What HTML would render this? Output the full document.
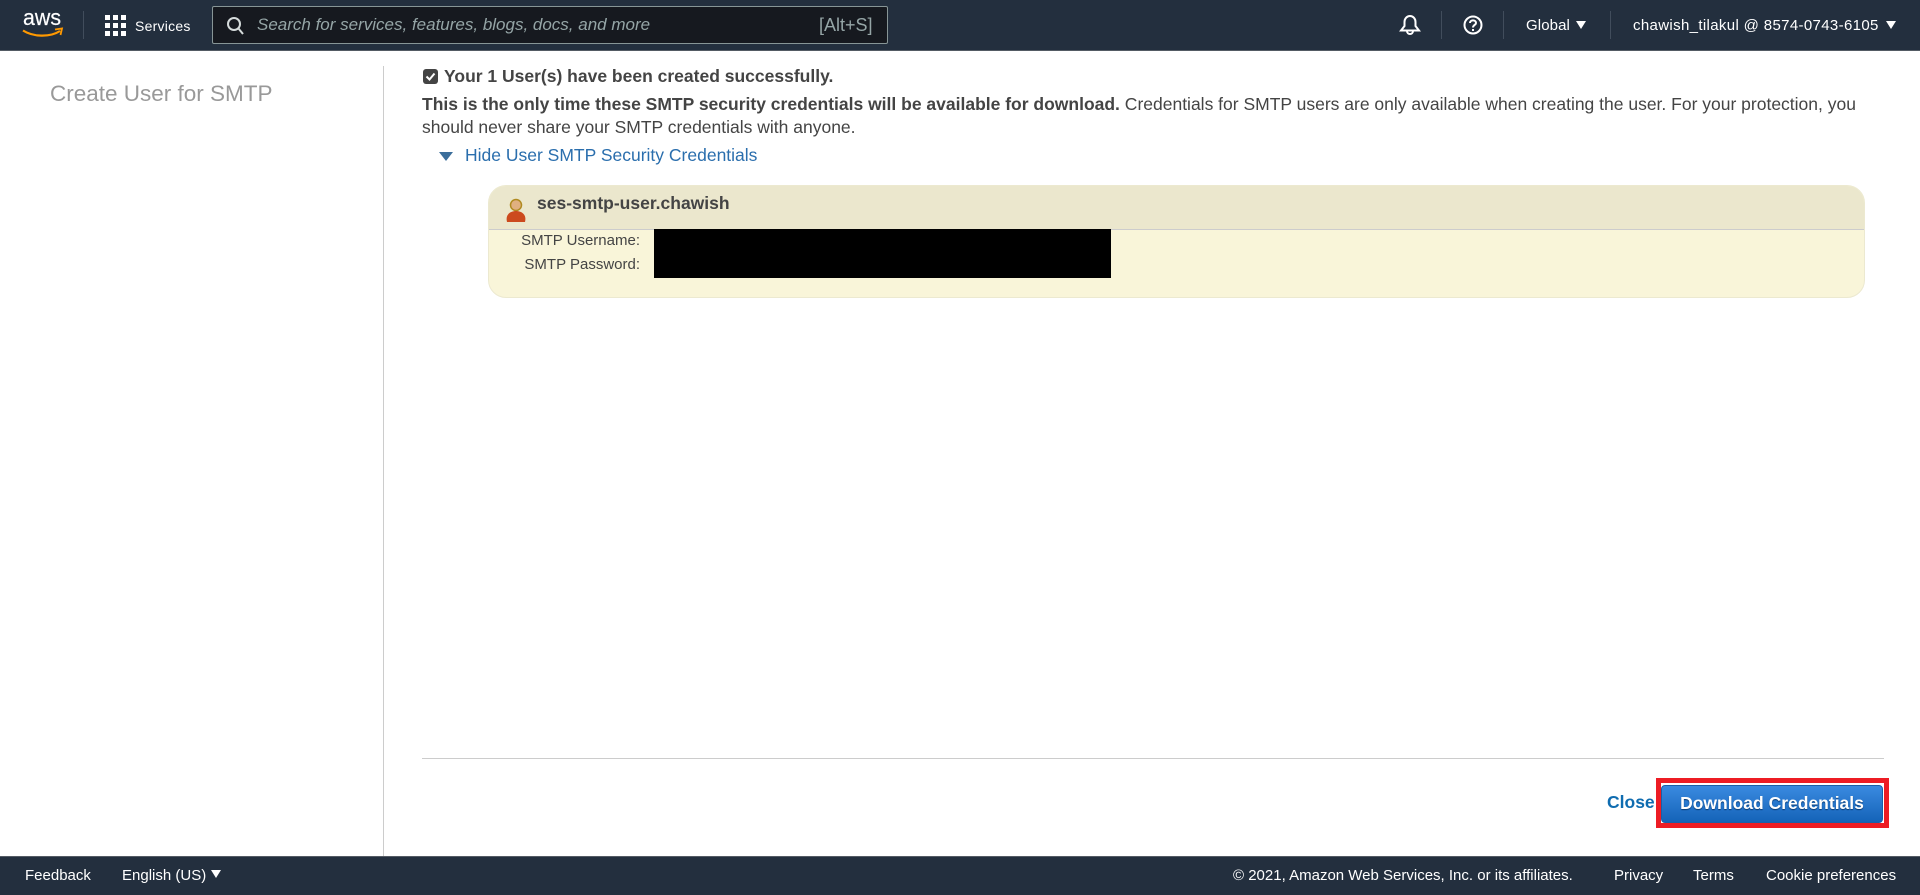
<!DOCTYPE html>
<html lang="en"><head><meta charset="utf-8"><title>Create User for SMTP</title>
<style>
html,body{margin:0;padding:0;background:#fff}
body{width:1920px;height:895px;position:relative;overflow:hidden;font-family:"Liberation Sans",sans-serif;color:#444}
.a{position:absolute;white-space:nowrap}
.n{color:#fff;font-size:15px;line-height:20px}
.d{position:absolute;width:1px;background:#414d5c}
.t{position:absolute;width:0;height:0;border-left:5.500px solid transparent;border-right:5.500px solid transparent;border-top:8px solid #fff}
.m{font-size:17.500px;line-height:20px}
</style></head><body>
<div class="a" style="left:0;top:0;width:1920px;height:50px;background:#232f3e;border-bottom:1px solid #545b64"></div>
<svg class="a" style="left:20px;top:10px" width="46" height="30" viewBox="0 0 46 30"><text x="3" y="15" font-family="Liberation Sans" font-size="22" fill="#fff" stroke="#fff" stroke-width=".2" textLength="38" lengthAdjust="spacingAndGlyphs">aws</text><path d="M3 20.500C13 27 30 27.500 40 21" fill="none" stroke="#f90" stroke-width="2.200"/><path d="M35 19.500L42 18.500L40.500 25" fill="none" stroke="#f90" stroke-width="1.800"/></svg>
<div class="d" style="left:83px;top:11px;height:28px"></div>
<svg class="a" style="left:105px;top:15px" width="21" height="21" fill="#fff"><rect width="5" height="5"/><rect x="8" width="5" height="5"/><rect x="16" width="5" height="5"/><rect y="8" width="5" height="5"/><rect x="8" y="8" width="5" height="5"/><rect x="16" y="8" width="5" height="5"/><rect y="16" width="5" height="5"/><rect x="8" y="16" width="5" height="5"/><rect x="16" y="16" width="5" height="5"/></svg>
<div class="a" style="left:135px;top:16px;font-size:14px;line-height:20px;color:#fff;letter-spacing:.25px">Services</div>
<div class="a" style="left:212px;top:6px;width:674px;height:36px;background:#16191f;border:1px solid #879596;border-radius:2px"></div>
<svg class="a" style="left:226px;top:16px" width="20" height="20" fill="none" stroke="#d5dbdb" stroke-width="2"><circle cx="8" cy="8" r="6"/><path d="M12.500 12.500L17 18"/></svg>
<div class="a" style="left:257px;top:15px;font-size:17px;line-height:20px;font-style:italic;color:#95a5a6">Search for services, features, blogs, docs, and more</div>
<div class="a" style="left:819px;top:15px;font-size:18px;line-height:20px;color:#95a5a6">[Alt+S]</div>
<svg class="a" style="left:1399px;top:14px" width="22" height="22" fill="none" stroke="#fff" stroke-width="2"><path d="M2 16.500H20L16.500 12V8C16.500 4.500 14 2 11 2S5.500 4.500 5.500 8V12Z"/><path d="M8 17C8 21 14 21 14 17"/></svg>
<div class="d" style="left:1441px;top:11px;height:28px"></div>
<svg class="a" style="left:1463px;top:15px" width="20" height="20" fill="none" stroke="#fff" stroke-width="2"><circle cx="10" cy="10" r="8.500"/><path d="M7 8C7 4.500 13 4.500 13 8C13 10 10 10 10 12.500"/><path d="M10 14V16"/></svg>
<div class="d" style="left:1503px;top:11px;height:28px"></div>
<div class="a n" style="left:1526px;top:16px;letter-spacing:.1px">Global</div>
<div class="t" style="left:1576px;top:21px"></div>
<div class="d" style="left:1610px;top:11px;height:28px"></div>
<div class="a n" style="left:1633px;top:16px;letter-spacing:.35px">chawish_tilakul @ 8574-0743-6105</div>
<div class="t" style="left:1886px;top:21px"></div>

<div class="a" style="left:50px;top:81px;font-size:22.500px;line-height:26px;color:#999">Create User for SMTP</div>
<div class="a" style="left:383px;top:66px;width:1px;height:790px;background:#ccc"></div>

<svg class="a" style="left:423px;top:69px" width="15" height="15"><rect width="15" height="15" rx="3" fill="#444"/><path d="M3.500 7.500L6.500 10.500L11.500 4.500" fill="none" stroke="#fff" stroke-width="2"/></svg>
<div class="a m" style="left:444px;top:66px;font-weight:700">Your 1 User(s) have been created successfully.</div>
<div class="a m" style="left:422px;top:94px"><b>This is the only time these SMTP security credentials will be available for download.</b> Credentials for SMTP users are only available when creating the user. For your protection, you</div>
<div class="a m" style="left:422px;top:117px">should never share your SMTP credentials with anyone.</div>
<div class="t" style="left:439px;top:152px;border-left-width:7px;border-right-width:7px;border-top:9px solid #3b6e9b"></div>
<div class="a m" style="left:465px;top:145px;color:#2a6ead">Hide User SMTP Security Credentials</div>

<div class="a" style="left:488px;top:185px;width:1375px;height:111px;background:#f9f5d9;border:1px solid #ece9d0;border-radius:18px;overflow:hidden">
<div style="position:absolute;left:0;top:0;width:100%;height:43px;background:#ebe7cd;border-bottom:1px solid #ccc"></div></div>
<svg class="a" style="left:505px;top:197px" width="22" height="26"><circle cx="11" cy="8" r="5.500" fill="#e0b080" stroke="#b08a20" stroke-width="1.500"/><path d="M2 25C0 17 6 14 11 14S22 17 20 25Z" fill="#cc4a1e"/></svg>
<div class="a" style="left:537px;top:193px;font-size:17.500px;line-height:20px;font-weight:700">ses-smtp-user.chawish</div>
<div class="a" style="left:480px;top:232px;width:160px;text-align:right;font-size:15px;line-height:17px">SMTP Username:</div>
<div class="a" style="left:480px;top:256px;width:160px;text-align:right;font-size:15px;line-height:17px">SMTP Password:</div>
<div class="a" style="left:654px;top:229px;width:457px;height:49px;background:#000"></div>

<div class="a" style="left:422px;top:758px;width:1462px;height:1px;background:#ccc"></div>
<div class="a m" style="left:1607px;top:792px;font-weight:700;color:#0f6cb0">Close</div>
<div class="a" style="left:1656px;top:778px;width:223px;height:40px;border:5px solid #ed1c24"></div>
<div class="a" style="left:1661px;top:785px;width:222px;height:38px;box-sizing:border-box;background:linear-gradient(#3a8ae0,#1463b8);border:1px solid #1a5fa8;border-radius:4px;color:#fff;font-size:17.500px;line-height:34px;font-weight:700;text-align:center;text-shadow:0 1px 1px #0a3a70">Download Credentials</div>

<div class="a" style="left:0;top:856px;width:1920px;height:39px;background:#232f3e;border-top:1px solid #545b64;box-sizing:border-box"></div>
<div class="a n" style="left:25px;top:866px">Feedback</div>
<div class="a n" style="left:122px;top:866px">English (US)</div>
<div class="t" style="left:211px;top:870px"></div>
<div class="a n" style="left:1233px;top:866px">© 2021, Amazon Web Services, Inc. or its affiliates.</div>
<div class="a n" style="left:1614px;top:866px">Privacy</div>
<div class="a n" style="left:1693px;top:866px">Terms</div>
<div class="a n" style="left:1766px;top:866px">Cookie preferences</div>
</body></html>
